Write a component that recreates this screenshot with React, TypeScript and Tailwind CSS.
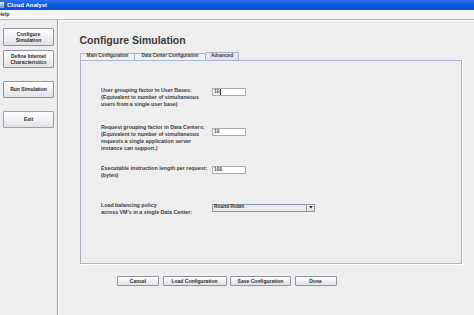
import React from "react";

const btn =
  "flex items-center justify-center border border-[#8e959e] rounded-[1px] bg-gradient-to-b from-[#ffffff] to-[#dfe3e8] text-[#2a2a2a] font-bold text-[5px] leading-[6.5px] text-center";

function LeftButton({ children, h, blue }: { children: React.ReactNode; h: string; blue?: boolean }) {
  return (
    <div
      className={`${btn} ${h} w-[51px] ${blue ? "from-[#ffffff] to-[#c8d9ef] border-[#8fa3bd]" : ""}`}
    >
      {children}
    </div>
  );
}

function Field({ value, cursor }: { value: string; cursor?: boolean }) {
  return (
    <div className="mt-[1.5px] w-[34px] h-[8px] bg-white border border-[#a5acb5] flex items-center pl-[1px] text-[5px] text-[#444]">
      <span>{value}</span>
      {cursor && <span className="w-[0.6px] h-[6px] bg-[#333]" />}
    </div>
  );
}

export default function App() {
  return (
    <div
      className="w-[474px] h-[315px] overflow-hidden bg-[#eeeeee] flex flex-col text-[#333]"
      style={{ fontFamily: '"Liberation Sans", Arial, sans-serif' }}
    >
      {/* title bar */}
      <div className="h-[10px] shrink-0 bg-gradient-to-b from-[#2a72f0] via-[#0b57e3] to-[#0a4fd4] flex items-center">
        <div className="w-[5px] h-[6px] bg-gradient-to-b from-[#d8e4f4] to-[#7a96c0] border-r border-[#3a5e9a]" />
        <span className="ml-[2px] text-white font-bold text-[6px] leading-none">Cloud Analyst</span>
      </div>
      {/* menu bar */}
      <div className="h-[10px] shrink-0 bg-[#f6f6f6] flex items-center border-b border-[#b5b5b5]">
        <span className="ml-[-1.5px] text-[5px] font-bold text-[#333] leading-none">Help</span>
      </div>
      {/* main */}
      <div className="flex flex-1 min-h-0">
        {/* left panel */}
        <div className="w-[58px] shrink-0 border-r border-[#9c9c9c] bg-[#eeeeee] flex flex-col pt-[8px]">
          <div className="flex flex-col items-start w-full pl-[3px]">
            <LeftButton h="h-[18px]">
              Configure
              <br />
              Simulation
            </LeftButton>
            <div className="h-[4px]" />
            <LeftButton h="h-[18px]">
              Define Internet
              <br />
              Characteristics
            </LeftButton>
            <div className="h-[13px]" />
            <LeftButton h="h-[17px]">Run Simulation</LeftButton>
            <div className="h-[13px]" />
            <LeftButton h="h-[17px]" blue>
              Exit
            </LeftButton>
          </div>
        </div>
        {/* content */}
        <div className="flex-1 border-l border-white border-t flex flex-col">
          <div className="pl-[20.5px] pt-[5.5px] h-[31px]">
            <span className="text-[10.5px] font-bold text-[#3a3a3a] leading-[12px]">Configure Simulation</span>
          </div>
          {/* tabs */}
          <div className="pl-[21px] flex items-end h-[8px]">
            <div className="h-[7.5px] w-[55px] border border-b-0 border-[#a9b6c8] bg-[#f1f1f1] flex items-center justify-center text-[4.6px] font-bold text-[#3a3a3a] leading-none">
              Main Configuration
            </div>
            <div className="h-[7.5px] w-[71px] border border-b-0 border-l-0 border-[#a9b6c8] bg-[#f1f1f1] flex items-center justify-center text-[4.6px] font-bold text-[#3a3a3a] leading-none">
              Data Center Configuration
            </div>
            <div className="h-[8px] w-[33px] border border-b-0 border-l-0 border-[#a9b6c8] bg-[#dde6f3] flex items-center justify-center text-[4.6px] font-bold text-[#3a3a3a] leading-none">
              Advanced
            </div>
          </div>
          {/* tab panel */}
          <div className="ml-[21px] w-[382px] h-[204px] border border-[#a9b6c8] shadow-[1px_1px_0_#ffffff] flex flex-col pl-[20px] pt-[25.5px] text-[5.3px] font-bold text-[#3c3c3c]">
            <div className="flex items-start h-[21px]">
              <div className="w-[111px] leading-[7px]">
                User grouping factor in User Bases:
                <br />
                (Equivalent to number of simultaneous
                <br />
                users from a single user base)
              </div>
              <Field value="10" cursor />
            </div>
            <div className="h-[16px]" />
            <div className="flex items-start h-[28px]">
              <div className="w-[111px] leading-[7px]">
                Request grouping factor in Data Centers:
                <br />
                (Equivalent to number of simultaneous
                <br />
                requests a single application server
                <br />
                instance can support.)
              </div>
              <div className="mt-[3px]">
                <Field value="10" />
              </div>
            </div>
            <div className="h-[13px]" />
            <div className="flex items-start h-[14px]">
              <div className="w-[111px] leading-[7px]">
                Executable instruction length per request:
                <br />
                (bytes)
              </div>
              <Field value="100" />
            </div>
            <div className="h-[23px]" />
            <div className="flex items-start h-[15px]">
              <div className="w-[111px] leading-[7.5px]">
                Load balancing policy
                <br />
                across VM's in a single Data Center:
              </div>
              <div className="mt-[2.5px] w-[103px] h-[7.5px] border border-[#8f99a6] bg-[#e6e8ec] flex items-center">
                <span className="flex-1 pl-[1px] text-[4.8px] font-bold text-[#2a2a2a] leading-none">Round Robin</span>
                <div className="w-[8px] h-full border-l border-[#8f99a6] bg-gradient-to-b from-white to-[#d9dde3] flex items-center justify-center">
                  <svg width="4" height="3" viewBox="0 0 4 3">
                    <path d="M0 0 L4 0 L2 2.5 Z" fill="#222" />
                  </svg>
                </div>
              </div>
            </div>
          </div>
          {/* buttons */}
          <div className="flex pl-[58px] mt-[12px] gap-[3.5px]">
            <div className={`${btn} w-[42px] h-[10px]`}>Cancel</div>
            <div className={`${btn} w-[64px] h-[10px]`}>Load Configuration</div>
            <div className={`${btn} w-[61px] h-[10px]`}>Save Configuration</div>
            <div className={`${btn} w-[42px] h-[10px]`}>Done</div>
          </div>
        </div>
      </div>
    </div>
  );
}
